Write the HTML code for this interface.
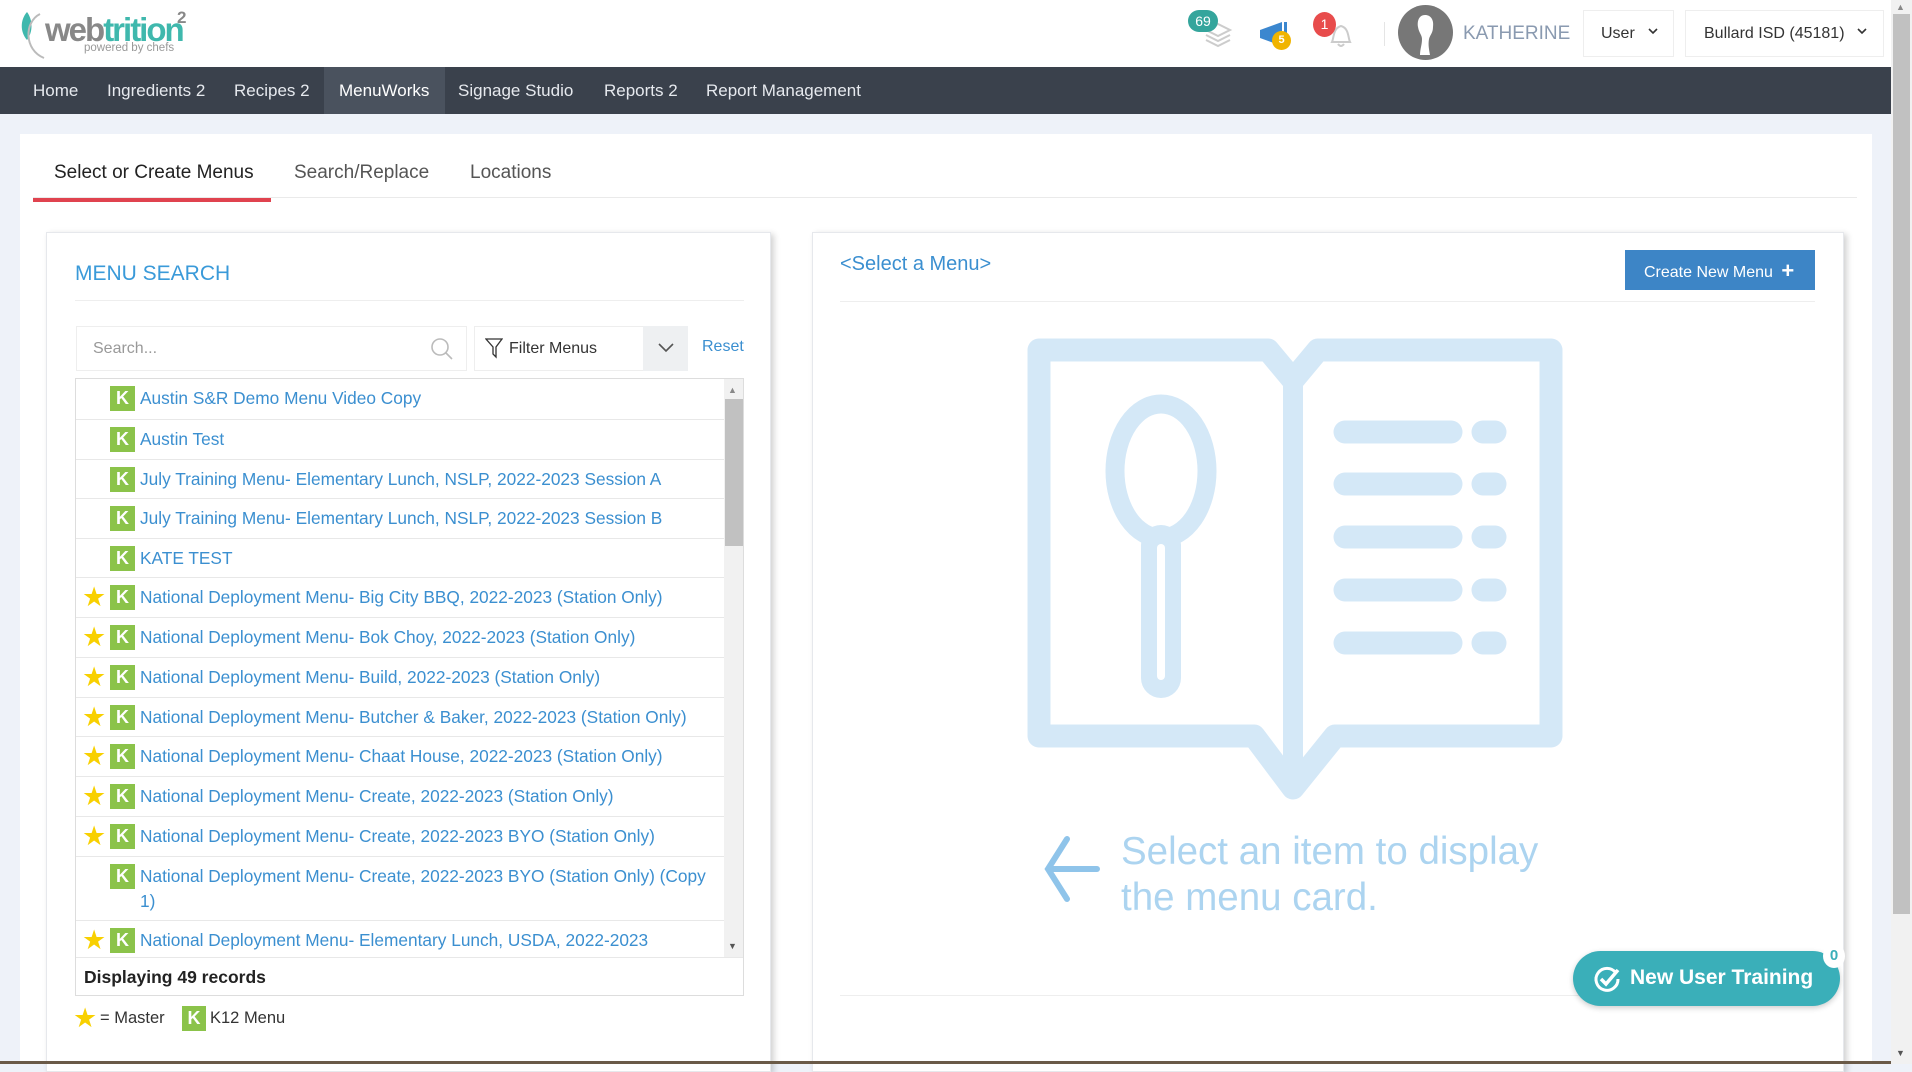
<!DOCTYPE html>
<html><head><meta charset="utf-8">
<style>
*{box-sizing:border-box;margin:0;padding:0}
body{width:1912px;height:1064px;overflow:hidden;background:#eef2f9;font-family:"Liberation Sans",Arial,sans-serif;position:relative}
.abs{position:absolute}
#hdr{left:0;top:0;width:1891px;height:67px;background:#fff}
#nav{left:0;top:67px;width:1891px;height:47px;background:#3a414c}
#nav span{position:absolute;top:0;height:47px;line-height:47px;color:#e6e9ee;font-size:17px}
#card{left:20px;top:134px;width:1852px;height:930px;background:#fff}
.tab{position:absolute;top:162px;font-size:19px;color:#555}
.panel{background:#fff;border:1px solid #e6e8ec;box-shadow:3px 2px 6px rgba(0,0,0,.18)}
.row{position:absolute;left:0;width:648px;border-top:1px solid #e8e8e8;font-size:17.3px;color:#3b8fd0}
.k{position:absolute;left:34px;width:25px;height:25px;background:#8bc34a;color:#fff;font-size:18px;font-weight:bold;text-align:center;line-height:25px}
.st{position:absolute;left:6px;color:#f8d000;font-size:27px;line-height:25px}
.rt{position:absolute;left:64px;line-height:25px;white-space:nowrap}
</style></head><body>
<div id="hdr" class="abs">
 <svg class="abs" style="left:18px;top:6px" width="40" height="56" viewBox="0 0 40 56">
  <path d="M9 6 C2 14 2 26 9 34 C15 26 15 14 9 6Z" fill="#3fb8ad"/>
  <path d="M22 8 C6 16 6 44 26 52" stroke="#bbb" stroke-width="2" fill="none"/>
 </svg>
 <div class="abs" style="left:45px;top:11px;font-size:33px;font-weight:bold;letter-spacing:-2px;color:#888">web<span style="color:#3fb8ad">trition</span></div>
 <div class="abs" style="left:177px;top:8px;font-size:17px;font-weight:bold;color:#888">2</div>
 <div class="abs" style="left:84px;top:42px;font-size:11.5px;color:#999">powered by chefs</div>
 <svg class="abs" style="left:1200px;top:18px" width="36" height="30" viewBox="0 0 36 30"><g fill="none" stroke="#ccc" stroke-width="2"><path d="M6 12 L18 6 L30 12 L18 18Z"/><path d="M6 17 L18 23 L30 17"/><path d="M6 22 L18 28 L30 22"/></g></svg>
 <div class="abs" style="left:1188px;top:10px;width:30px;height:22px;border-radius:11px;background:#34a59c;color:#fff;font-size:14px;text-align:center;line-height:22px">69</div>
 <svg class="abs" style="left:1258px;top:20px" width="34" height="30" viewBox="0 0 34 30"><path d="M2 10 L24 2 L24 26 L2 18Z" fill="#3b87cf"/><rect x="26" y="2" width="3" height="24" fill="#3b87cf"/></svg>
 <div class="abs" style="left:1272px;top:31px;width:19px;height:19px;border-radius:50%;background:#f0b400;color:#fff;font-size:11px;font-weight:bold;text-align:center;line-height:19px">5</div>
 <svg class="abs" style="left:1326px;top:18px" width="30" height="32" viewBox="0 0 30 32"><path d="M6 24 C8 20 7 10 15 8 C23 10 22 20 24 24Z M12 26 Q15 30 18 26" fill="none" stroke="#ccc" stroke-width="2"/></svg>
 <div class="abs" style="left:1313px;top:12px;width:23px;height:25px;border-radius:50%;background:#e84c4c;color:#fff;font-size:14px;text-align:center;line-height:25px">1</div>
 <div class="abs" style="left:1384px;top:22px;width:1px;height:24px;background:#e5e5e5"></div>
 <div class="abs" style="left:1398px;top:5px;width:55px;height:55px;border-radius:50%;background:#777"></div>
 <svg class="abs" style="left:1398px;top:5px" width="55" height="55" viewBox="0 0 55 55"><path d="M27 10 C21 10 19 16 20 22 C21 28 24 30 24 34 C24 40 22 44 22 50 L32 50 C31 44 30 40 31 34 C32 30 35 28 35 22 C36 15 33 10 27 10Z" fill="#fff"/></svg>
 <div class="abs" style="left:1463px;top:23px;font-size:19px;color:#8a9ab0">KATHERINE</div>
 <div class="abs" style="left:1583px;top:10px;width:91px;height:47px;border:1px solid #eee;font-size:16px;line-height:45px;padding-left:17px;color:#333">User</div>
 <svg class="abs" style="left:1647px;top:27px" width="12" height="8" viewBox="0 0 12 8"><path d="M2 2 L6 6 L10 2" fill="none" stroke="#333" stroke-width="1.6"/></svg>
 <div class="abs" style="left:1685px;top:10px;width:199px;height:47px;border:1px solid #eee;font-size:16px;line-height:45px;padding-left:18px;color:#333">Bullard ISD (45181)</div>
 <svg class="abs" style="left:1856px;top:27px" width="12" height="8" viewBox="0 0 12 8"><path d="M2 2 L6 6 L10 2" fill="none" stroke="#333" stroke-width="1.6"/></svg>
</div>
<div id="nav" class="abs">
 <div class="abs" style="left:324px;top:0;width:121px;height:47px;background:#4a525e"></div>
 <span style="left:33px">Home</span><span style="left:107px">Ingredients 2</span><span style="left:234px">Recipes 2</span><span style="left:339px;color:#fff">MenuWorks</span><span style="left:458px">Signage Studio</span><span style="left:604px">Reports 2</span><span style="left:706px">Report Management</span>
</div>
<div id="card" class="abs"></div>
<div class="tab" style="left:54px;color:#222">Select or Create Menus</div>
<div class="tab" style="left:294px">Search/Replace</div>
<div class="tab" style="left:470px">Locations</div>
<div class="abs" style="left:33px;top:197px;width:1824px;height:1px;background:#eaeaea"></div>
<div class="abs" style="left:33px;top:198px;width:238px;height:4px;background:#e0434f"></div>

<div class="abs panel" style="left:46px;top:232px;width:725px;height:840px"></div>
<div class="abs" style="left:75px;top:262px;font-size:21px;color:#3a9ad9">MENU SEARCH</div>
<div class="abs" style="left:75px;top:300px;width:669px;height:1px;background:#eee"></div>
<div class="abs" style="left:76px;top:326px;width:391px;height:45px;border:1px solid #eee;font-size:16px;color:#999;line-height:43px;padding-left:16px">Search...</div>
<svg class="abs" style="left:430px;top:337px" width="24" height="24" viewBox="0 0 24 24"><circle cx="10" cy="10" r="8" fill="none" stroke="#bbb" stroke-width="1.6"/><path d="M16 16 L22 22" stroke="#bbb" stroke-width="1.6"/></svg>
<div class="abs" style="left:474px;top:326px;width:214px;height:45px;border:1px solid #eee"></div>
<div class="abs" style="left:643px;top:326px;width:45px;height:45px;background:#eef0f2"></div>
<svg class="abs" style="left:657px;top:341px" width="18" height="14" viewBox="0 0 18 14"><path d="M2 3 L9 10 L16 3" fill="none" stroke="#555" stroke-width="1.6"/></svg>
<svg class="abs" style="left:485px;top:337px" width="18" height="22" viewBox="0 0 18 22"><path d="M1 2 H17 L11 10 V20 L8 17 V10Z" fill="none" stroke="#333" stroke-width="1.3"/></svg>
<div class="abs" style="left:509px;top:340px;font-size:16px;color:#333">Filter Menus</div>
<div class="abs" style="left:702px;top:338px;font-size:16px;color:#3b8fd0">Reset</div>

<div class="abs" style="left:75px;top:378px;width:669px;height:618px;border:1px solid #ddd;overflow:hidden">
 <div class="abs" style="left:648px;top:0;width:20px;height:578px;background:#f1f1f1"></div>
 <div class="abs" style="left:649px;top:20px;width:18px;height:147px;background:#c1c1c1"></div>
 <div class="abs" style="left:652px;top:6px;font-size:9px;color:#888">&#9650;</div>
 <div class="abs" style="left:652px;top:562px;font-size:9px;color:#555">&#9660;</div>
 <div class="row" style="top:-1px;height:41px;border-top:none"><div class="k" style="top:8px">K</div><div class="rt" style="top:8px">Austin S&amp;R Demo Menu Video Copy</div></div>
 <div class="row" style="top:40px;height:40px"><div class="k" style="top:7px">K</div><div class="rt" style="top:7px">Austin Test</div></div>
 <div class="row" style="top:80px;height:40px"><div class="k" style="top:7px">K</div><div class="rt" style="top:7px">July Training Menu- Elementary Lunch, NSLP, 2022-2023 Session A</div></div>
 <div class="row" style="top:119px;height:40px"><div class="k" style="top:7px">K</div><div class="rt" style="top:7px">July Training Menu- Elementary Lunch, NSLP, 2022-2023 Session B</div></div>
 <div class="row" style="top:159px;height:40px"><div class="k" style="top:7px">K</div><div class="rt" style="top:7px">KATE TEST</div></div>
 <div class="row" style="top:198px;height:40px"><div class="st" style="top:7px">★</div><div class="k" style="top:7px">K</div><div class="rt" style="top:7px">National Deployment Menu- Big City BBQ, 2022-2023 (Station Only)</div></div>
 <div class="row" style="top:238px;height:40px"><div class="st" style="top:7px">★</div><div class="k" style="top:7px">K</div><div class="rt" style="top:7px">National Deployment Menu- Bok Choy, 2022-2023 (Station Only)</div></div>
 <div class="row" style="top:278px;height:40px"><div class="st" style="top:7px">★</div><div class="k" style="top:7px">K</div><div class="rt" style="top:7px">National Deployment Menu- Build, 2022-2023 (Station Only)</div></div>
 <div class="row" style="top:318px;height:40px"><div class="st" style="top:7px">★</div><div class="k" style="top:7px">K</div><div class="rt" style="top:7px">National Deployment Menu- Butcher &amp; Baker, 2022-2023 (Station Only)</div></div>
 <div class="row" style="top:357px;height:40px"><div class="st" style="top:7px">★</div><div class="k" style="top:7px">K</div><div class="rt" style="top:7px">National Deployment Menu- Chaat House, 2022-2023 (Station Only)</div></div>
 <div class="row" style="top:397px;height:40px"><div class="st" style="top:7px">★</div><div class="k" style="top:7px">K</div><div class="rt" style="top:7px">National Deployment Menu- Create, 2022-2023 (Station Only)</div></div>
 <div class="row" style="top:437px;height:40px"><div class="st" style="top:7px">★</div><div class="k" style="top:7px">K</div><div class="rt" style="top:7px">National Deployment Menu- Create, 2022-2023 BYO (Station Only)</div></div>
 <div class="row" style="top:477px;height:64px"><div class="k" style="top:7px">K</div><div class="rt" style="top:7px;line-height:25px;white-space:normal;width:580px">National Deployment Menu- Create, 2022-2023 BYO (Station Only) (Copy 1)</div></div>
 <div class="row" style="top:541px;height:40px"><div class="st" style="top:7px">★</div><div class="k" style="top:7px">K</div><div class="rt" style="top:7px">National Deployment Menu- Elementary Lunch, USDA, 2022-2023</div></div>
 <div class="abs" style="left:0;top:578px;width:669px;height:40px;background:#fff;border-top:1px solid #e8e8e8;font-size:17.5px;font-weight:bold;color:#222;line-height:38px;padding-left:8px">Displaying 49 records</div>
</div>
<div class="abs" style="left:73px;top:1003px;color:#f8d000;font-size:27px">★</div>
<div class="abs" style="left:100px;top:1009px;font-size:16.5px;color:#333">= Master</div>
<div class="abs" style="left:182px;top:1006px;width:24px;height:25px;background:#8bc34a;color:#fff;font-size:18px;font-weight:bold;text-align:center;line-height:25px">K</div>
<div class="abs" style="left:210px;top:1009px;font-size:16.5px;color:#333">K12 Menu</div>

<div class="abs panel" style="left:812px;top:232px;width:1032px;height:840px"></div>
<div class="abs" style="left:840px;top:253px;font-size:20px;color:#3b8fd0">&lt;Select a Menu&gt;</div>
<div class="abs" style="left:1625px;top:250px;width:190px;height:40px;background:#3d85c6;color:#fff;font-size:16px;line-height:40px;padding-left:19px">Create New Menu <span style="font-size:22px;font-weight:bold;position:relative;top:1px;margin-left:4px">+</span></div>
<div class="abs" style="left:840px;top:301px;width:975px;height:1px;background:#eee"></div>
<svg class="abs" style="left:0;top:0" width="1912" height="1064" viewBox="0 0 1912 1064">
 <g stroke="#d4e8f7" fill="none" stroke-width="23" stroke-linejoin="round" stroke-linecap="round">
  <path d="M1039 350 H1268 L1293 380 L1318 350 H1551 V736 H1335 L1293 788 L1254 736 H1039 Z"/>
  <path d="M1293 385 V780" stroke-width="20"/>
  <ellipse cx="1161" cy="471" rx="46" ry="67" stroke-width="19"/>
  <path d="M1161 545 V678" stroke-width="40"/>
  <path d="M1345 432 H1451 M1345 484 H1451 M1345 537 H1451 M1345 590 H1451 M1345 643 H1451"/>
  <path d="M1483 432 H1495 M1483 484 H1495 M1483 537 H1495 M1483 590 H1495 M1483 643 H1495"/>
 </g>
 <path d="M1161 548 V676" stroke="#fff" stroke-width="8" stroke-linecap="round"/>
 <path d="M1067 839 L1048 869 L1067 899 M1050 869 H1097" stroke="#8fc4ea" stroke-width="6" fill="none" stroke-linecap="round"/>
 <text x="1121" y="864" font-family="Liberation Sans, sans-serif" font-size="38.5" fill="#acd4f0">Select an item to display</text>
 <text x="1121" y="910" font-family="Liberation Sans, sans-serif" font-size="38.5" fill="#acd4f0">the menu card.</text>
</svg>
<div class="abs" style="left:840px;top:995px;width:975px;height:1px;background:#eee"></div>
<div class="abs" style="left:1573px;top:951px;width:267px;height:55px;border-radius:28px;background:#3aafb9;box-shadow:0 2px 6px rgba(0,0,0,.2)"></div>
<svg class="abs" style="left:1592px;top:964px" width="30" height="30" viewBox="0 0 30 30"><path d="M24 9 A11 11 0 1 0 26 15" fill="none" stroke="#fff" stroke-width="3"/><path d="M9 15 L14 20 L26 6" fill="none" stroke="#fff" stroke-width="3.5"/></svg>
<div class="abs" style="left:1630px;top:966px;font-size:21px;font-weight:bold;color:#fff">New User Training</div>
<div class="abs" style="left:1823px;top:944px;width:22px;height:24px;border-radius:50%;background:#fff;color:#3aafb9;font-size:15px;font-weight:bold;text-align:center;line-height:24px">0</div>

<div class="abs" style="left:1891px;top:0;width:21px;height:1064px;background:#f1f1f1"></div>
<div class="abs" style="left:1893px;top:14px;width:17px;height:900px;background:#c1c1c1"></div>
<div class="abs" style="left:1896px;top:2px;font-size:9px;color:#888">&#9650;</div>
<div class="abs" style="left:1896px;top:1048px;font-size:9px;color:#555">&#9660;</div>
<div class="abs" style="left:0;top:1061px;width:1891px;height:3px;background:#6a5a48"></div>
</body></html>
